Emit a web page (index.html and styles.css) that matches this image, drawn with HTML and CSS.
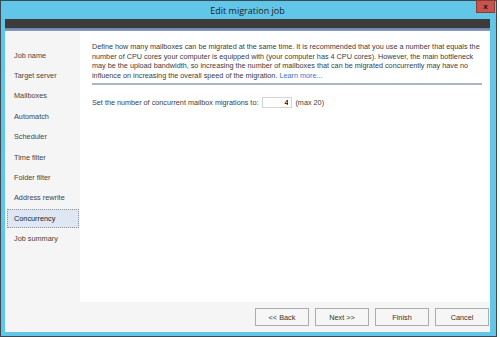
FILE: index.html
```html
<html>
<head>
  <title>Edit migration job</title>
  <link rel="stylesheet" href="styles.css">
</head>
<body>
  <div class="window">
    <div class="titlebar">
      <span class="title">Edit migration job</span>
      <div class="close-button">x</div>
    </div>
    <div class="darkbar"></div>
    <div class="client">
      <div class="panes">
        <ul class="steps">
          <li class="step">Job name</li>
          <li class="step">Target server</li>
          <li class="step">Mailboxes</li>
          <li class="step">Automatch</li>
          <li class="step">Scheduler</li>
          <li class="step">Time filter</li>
          <li class="step">Folder filter</li>
          <li class="step">Address rewrite</li>
          <li class="step step-active">Concurrency</li>
          <li class="step">Job summary</li>
        </ul>
        <div class="page">
          <p class="intro">
            Define how many mailboxes can be migrated at the same time. It is recommended that you use a number that equals the<br>
            number of CPU cores your computer is equipped with (your computer has 4 CPU cores). However, the main bottleneck<br>
            may be the upload bandwidth, so increasing the number of mailboxes that can be migrated concurrently may have no<br>
            influence on increasing the overall speed of the migration. <a class="learn-more" href="#">Learn more...</a>
          </p>
          <div class="separator"></div>
          <div class="setting">
            <span>Set the number of concurrent mailbox migrations to:</span>
            <input type="text" class="count-input" value="4">
            <span>(max 20)</span>
          </div>
        </div>
      </div>
      <div class="footer">
        <button class="wizard-button">&lt;&lt; Back</button>
        <button class="wizard-button">Next &gt;&gt;</button>
        <button class="wizard-button">Finish</button>
        <button class="wizard-button">Cancel</button>
      </div>
    </div>
  </div>
</body>
</html>
```

FILE: styles.css
```css
html, body {
  margin: 0;
  background-color: #ffffff;
  font-family: "Liberation Sans", Arial, sans-serif;
}

.window {
  width: 497px;
  height: 337px;
  box-sizing: border-box;
  border: 1px solid #3a4a52;
  background-color: #62c6e8;
  display: flex;
  flex-direction: column;
  padding: 0 6px 4px 4px;
}

.titlebar {
  position: relative;
  height: 18px;
  flex: none;
  display: flex;
  justify-content: center;
  align-items: center;
}

.title {
  font-family: "Open Sans", "Noto Sans", sans-serif;
  font-size: 9px;
  color: #1b1b1b;
}

.close-button {
  position: absolute;
  top: -1px;
  right: -5px;
  width: 19px;
  height: 13px;
  box-sizing: border-box;
  background-color: #c7534d;
  border: 1px solid #8c3b36;
  color: #111;
  font-size: 8px;
  font-weight: bold;
  display: flex;
  justify-content: center;
  align-items: center;
}

.darkbar {
  height: 12px;
  flex: none;
  background: linear-gradient(#3c3c3c 0, #3c3c3c 9px, #6b7fa6 9px, #8fa0c0 12px);
}

.client {
  flex: 1;
  display: flex;
  flex-direction: column;
  background-color: #f5f5f5;
  border-left: 1px solid #e9f5fa;
}

.panes {
  flex: 1;
  display: flex;
}

.steps {
  list-style: none;
  margin: 0;
  padding: 15px 1px 0 1px;
  width: 74px;
  box-sizing: border-box;
  flex: none;
}

.step {
  height: 18.4px;
  margin-bottom: 2px;
  padding-left: 6px;
  box-sizing: border-box;
  border: 1px solid transparent;
  display: flex;
  align-items: center;
  font-size: 7.3px;
  color: #444;
}

.step-active {
  background-color: #dfe7f4;
  border: 1px dotted #8a8f99;
  color: #222;
}

.page {
  flex: 1;
  background-color: #ffffff;
  padding: 11px 8px 0 12px;
  font-size: 7.25px;
  color: #3c3c3c;
}

.intro {
  margin: 0;
  line-height: 9.6px;
  white-space: nowrap;
}

.learn-more {
  color: #2b7bd0;
  text-decoration: none;
}

.separator {
  height: 2px;
  margin-top: 3px;
  background-color: #a9b5c9;
}

.setting {
  margin-top: 12px;
  display: flex;
  align-items: center;
  gap: 3px;
}

.count-input {
  width: 30px;
  height: 11px;
  box-sizing: border-box;
  border: 1px solid #d4d4d4;
  padding: 0 3px;
  font-family: "Liberation Sans", Arial, sans-serif;
  font-size: 7.3px;
  font-weight: bold;
  color: #222;
  text-align: right;
  margin-left: 1px;
}

.footer {
  height: 30px;
  flex: none;
  display: flex;
  justify-content: flex-end;
  align-items: flex-start;
  gap: 6px;
  padding: 6px 1px 0 0;
  box-sizing: border-box;
}

.wizard-button {
  width: 54px;
  height: 18px;
  background-color: #f6f6f6;
  border: 1px solid #adadad;
  font-family: "Liberation Sans", Arial, sans-serif;
  font-size: 7.3px;
  color: #333;
  padding: 0;
}
```
